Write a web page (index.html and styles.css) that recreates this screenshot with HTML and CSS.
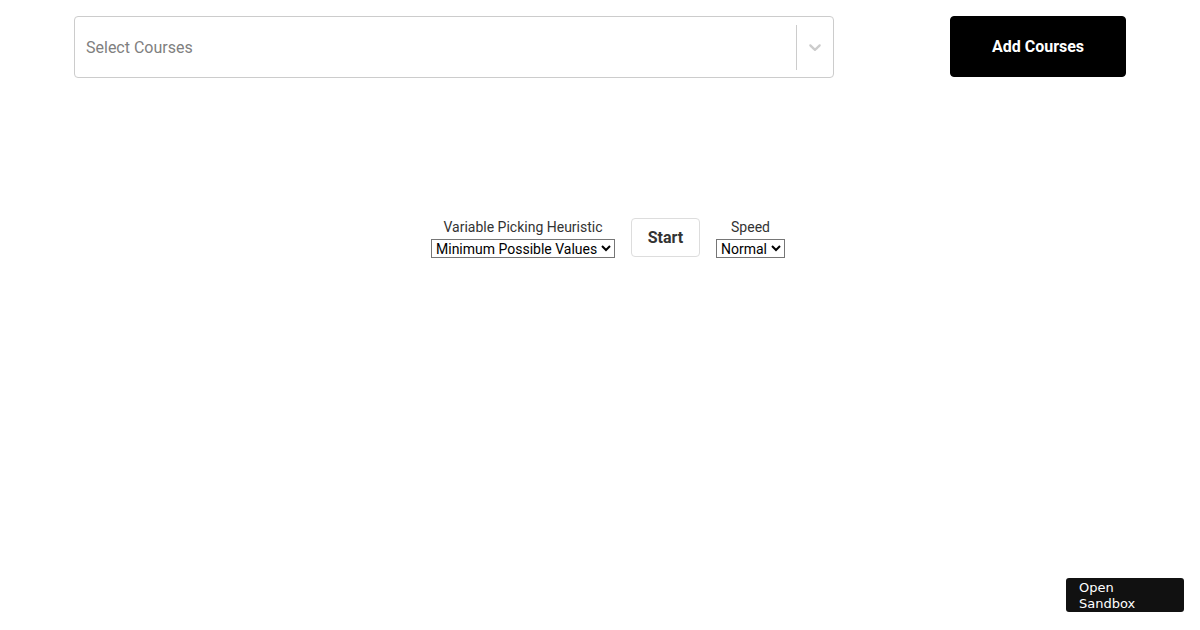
FILE: index.html
```html
<!DOCTYPE html>
<html>
<head>
<meta charset="utf-8">
<link rel="stylesheet" href="styles.css">
</head>
<body>
<div class="top">
  <div class="picker">
    <div class="picker-value">Select Courses</div>
    <div class="picker-ind">
      <span class="sep"></span>
      <span class="chev"><svg width="20" height="20" viewBox="0 0 20 20"><path d="M4.516 7.548c0.436-0.446 1.043-0.481 1.576 0l3.908 3.747 3.908-3.747c0.533-0.481 1.141-0.446 1.574 0 0.436 0.445 0.408 1.197 0 1.615-0.406 0.418-4.695 4.502-4.695 4.502-0.217 0.223-0.502 0.335-0.787 0.335s-0.57-0.112-0.789-0.335c0 0-4.287-4.084-4.695-4.502s-0.436-1.17 0-1.615z" fill="#ccc"/></svg></span>
    </div>
  </div>
  <button class="add">Add Courses</button>
</div>
<div class="controls">
  <div class="group">
    <label class="lbl">Variable Picking Heuristic</label>
    <select class="sel"><option>Minimum Possible Values</option></select>
  </div>
  <button class="start">Start</button>
  <div class="group">
    <label class="lbl">Speed</label>
    <select class="sel"><option>Normal</option></select>
  </div>
</div>
<div class="sandbox">Open Sandbox</div>
</body>
</html>
```
FILE: styles.css
```css
html, body { margin: 0; padding: 0; background: #fff; }
body { font-family: Roboto, "Liberation Sans", sans-serif; color: #333; width: 1200px; height: 630px; overflow: hidden; position: relative; }
.top { display: flex; justify-content: space-between; align-items: flex-start; padding: 16px 74px 0; }
.picker { width: 760px; height: 62px; box-sizing: border-box; border: 1px solid #ccc; border-radius: 4px; display: flex; align-items: center; }
.picker-value { flex: 1; padding-left: 11px; font-size: 16px; color: #808080; }
.picker-ind { display: flex; align-items: center; height: 100%; }
.sep { width: 1px; height: 45px; background: #ccc; }
.chev { width: 36px; display: flex; justify-content: center; align-items: center; }
.add { width: 176px; height: 61px; background: #000; color: #fff; border: 1px solid #000; border-radius: 4px; font-family: Roboto, sans-serif; font-weight: 700; font-size: 16px; cursor: pointer; }
.controls { display: flex; justify-content: center; align-items: flex-start; gap: 16px; margin-top: 140px; padding-left: 16px; }
.group { display: flex; flex-direction: column; align-items: center; padding-top: 1px; }
.lbl { font-size: 14px; color: #333; line-height: 16px; margin-bottom: 4px; }
.sel { font-family: Roboto, sans-serif; font-size: 14px; color: #000; height: 19px; padding: 0; border: 1px solid #767676; border-radius: 0; background: #fff; }
.start { width: 69px; height: 39px; background: #fff; border: 1px solid #ddd; border-radius: 4px; font-family: Roboto, sans-serif; font-weight: 700; font-size: 16px; color: #333; }
.sandbox { position: absolute; left: 1066px; top: 578px; width: 118px; height: 34px; box-sizing: border-box; background: #111; color: #fff; border-radius: 3px; font-family: "DejaVu Sans", sans-serif; font-size: 13px; line-height: 16px; padding: 2px 40px 0 13px; }
```
